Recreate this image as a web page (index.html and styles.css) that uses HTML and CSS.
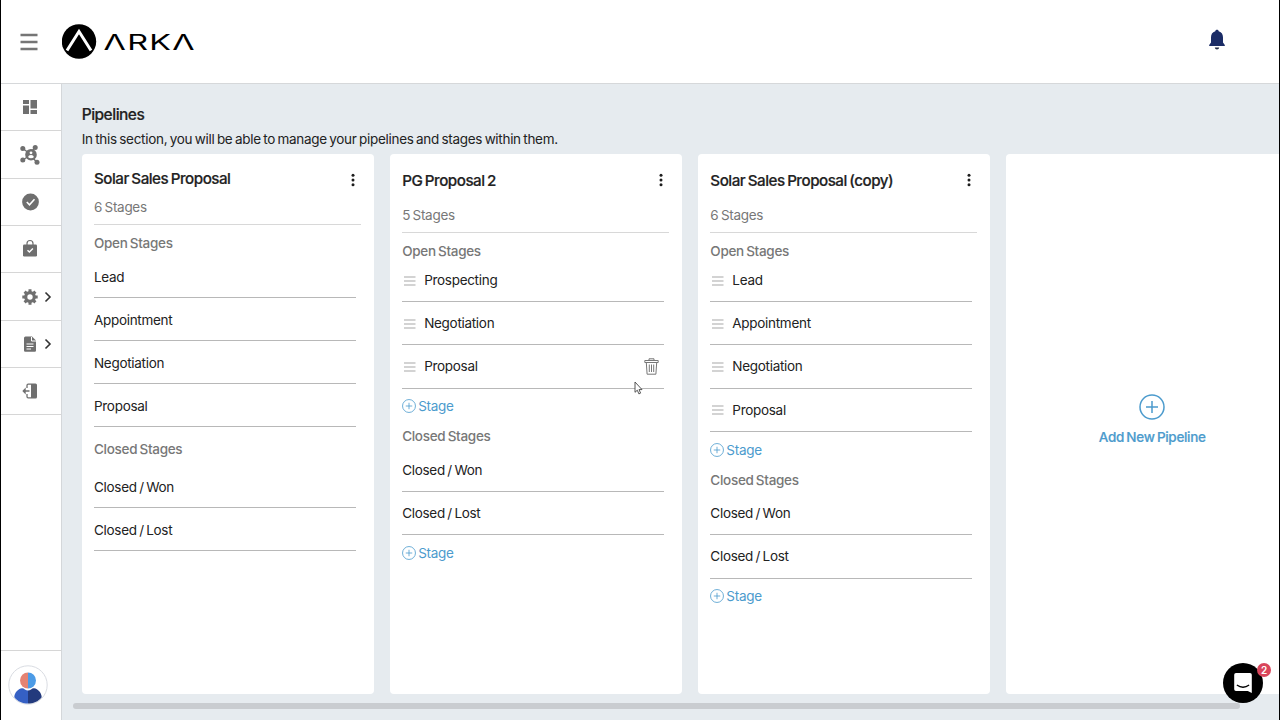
FILE: index.html
```html
<!DOCTYPE html>
<html lang="en">
<head>
    <meta charset="UTF-8">
    <meta name="viewport" content="width=device-width, initial-scale=1.0">
    <title>ARKA - Pipelines</title>
    <link rel="stylesheet" href="styles.css">
</head>
<body>
    <!-- Shared icons -->
    <svg class="hidden">
        <symbol id="drag" viewBox="0 0 12 10">
            <path d="M0 1h11.5M0 5h11.5M0 9h11.5" stroke="#a8a8a8" stroke-width="1.2"/>
        </symbol>
        <symbol id="dots" viewBox="0 0 4 14">
            <g fill="#1d1d1d"><circle cx="2" cy="2.2" r="1.5"/><circle cx="2" cy="7" r="1.5"/><circle cx="2" cy="11.8" r="1.5"/></g>
        </symbol>
        <symbol id="plus" viewBox="0 0 26 26">
            <circle cx="13" cy="13" r="12"/><path d="M13 7v12M7 13h12"/>
        </symbol>
        <symbol id="chevron" viewBox="0 0 8 12">
            <path d="M1.5 1.5L6 6l-4.500 4.500" fill="none" stroke="#333" stroke-width="1.600"/>
        </symbol>
    </svg>

    <header class="topbar">
        <svg class="burger" width="18" height="18"><path d="M.5 2h17M.5 9h17M.5 16h17" stroke="#757575" stroke-width="2.400"/></svg>
        <svg class="logo" width="136" height="36" viewBox="0 0 136 36">
            <circle cx="17" cy="17.500" r="17.200"/>
            <path d="M5 26.500L17 7.500l12 19" fill="none" stroke="#fff" stroke-width="3"/>
            <text x="41.500" y="26" textLength="92.500" lengthAdjust="spacingAndGlyphs">ΛRKΛ</text>
        </svg>
        <svg class="bell" width="18" height="22" viewBox="0 0 18 22">
            <path d="M9 .8c1 0 1.600.6 1.700 1.400C13.800 3 15 5.500 15 8.500v5l1.800 2.600v1H1.200v-1L3 13.500v-5C3 5.500 4.200 3 7.300 2.200 7.400 1.400 8 .8 9 .8z" fill="#1b2c66"/>
            <path d="M6.800 18.600h4.400c-.2 1.300-1 2-2.200 2s-2-.7-2.200-2z" fill="#222b45"/>
        </svg>
    </header>

    <div class="wrapper">
        <nav class="sidebar">
            <a class="nav-item">
                <svg width="20" height="20"><path d="M3 3h6v4H3zM3 8.500h6V17H3zM10.500 3H17v8.500h-6.500zM10.500 13H17v4h-6.500z"/></svg>
            </a>
            <a class="nav-item">
                <svg width="20" height="20" viewBox="0 0 20 20">
                    <path d="M3 3.500l5 4M15 2.500L12 6M3 15l5-3.500M16.500 17L13 13" stroke="#6f6f6f" stroke-width="1.400"/>
                    <circle cx="2.800" cy="3.500" r="2.500"/><circle cx="15.200" cy="2.500" r="2.500"/><circle cx="2.800" cy="15" r="2.500"/><circle cx="17" cy="17.300" r="2.500"/>
                    <circle cx="11" cy="9.700" r="5.800"/>
                    <g fill="#fff"><circle cx="11" cy="7.800" r="1.400"/><path d="M8.200 12.200c0-3 5.600-3 5.600 0-1.300 1.300-4.300 1.300-5.600 0z"/></g>
                </svg>
            </a>
            <a class="nav-item">
                <svg width="20" height="20"><circle cx="10.500" cy="10" r="8.400"/><path d="M6.800 10l2.700 2.800 5-5.500" fill="none" stroke="#fff" stroke-width="1.600"/></svg>
            </a>
            <a class="nav-item">
                <svg width="20" height="20"><path d="M7 6V4.500a3 3 0 0 1 6 0V6" fill="none" stroke="#6f6f6f" stroke-width="1.200"/><rect x="3" y="5.500" width="14" height="12" rx="1.200"/><path d="M7.500 11.200l1.900 1.900 3.500-3.600" fill="none" stroke="#fff" stroke-width="1.400"/></svg>
            </a>
            <a class="nav-item">
                <svg width="20" height="20" viewBox="0 0 20 20">
                    <circle cx="10" cy="10" r="4.200" fill="none" stroke="#6f6f6f" stroke-width="3.400"/>
                    <path d="M10 2.300v15.400M2.300 10h15.400M4.600 4.600l10.800 10.800M15.400 4.600L4.600 15.400" stroke="#6f6f6f" stroke-width="3"/>
                    <circle cx="10" cy="10" r="2.700" fill="#fff"/>
                </svg>
                <svg class="chevron" width="8" height="12"><use href="#chevron"/></svg>
            </a>
            <a class="nav-item">
                <svg width="20" height="20"><path d="M5.500 2.500H12l4 4V16.500a1.200 1.200 0 0 1-1.200 1.200H5.200A1.200 1.200 0 0 1 4 16.500V4a1.500 1.500 0 0 1 1.500-1.500z"/><path d="M11.500 3v4H16M6.500 10h7M6.500 12.500h7M6.500 15h4.500" fill="none" stroke="#fff" stroke-width="1"/></svg>
                <svg class="chevron" width="8" height="12"><use href="#chevron"/></svg>
            </a>
            <a class="nav-item">
                <svg width="20" height="20"><path d="M11 2.500h4.500a1.500 1.500 0 0 1 1.500 1.500v12a1.500 1.500 0 0 1-1.500 1.500H11z"/><path d="M11 3.200H8.200Q7 3.200 7 4.400V7M7 13v2.600q0 1.200 1.200 1.200H11M4.500 10H9.500" fill="none" stroke="#6f6f6f" stroke-width="1.300"/><path d="M5.700 6.600v6.800L2.300 10z"/></svg>
            </a>
            <div class="profile">
                <svg width="40" height="40" viewBox="0 0 40 40">
                    <circle cx="20" cy="20" r="19.200" fill="#fff" stroke="#d9dce2"/>
                    <path d="M20 7.500a8 8 0 0 0 0 16z" fill="#e58373"/>
                    <path d="M20 7.500a8 8 0 0 1 0 16z" fill="#4c9be6"/>
                    <path d="M20 25.500c-2.500 0-4-2.500-6-2.300-4 .5-7.500 4.500-7.700 9C9.500 36.500 15 38.500 20 38.500z" fill="#3560c4"/>
                    <path d="M20 25.500c2.500 0 4-2.500 6-2.300 4 .5 7.500 4.500 7.700 9-3.200 4.300-8.700 6.300-13.700 6.300z" fill="#233a7d"/>
                </svg>
            </div>
        </nav>

        <main class="content">
            <h1>Pipelines</h1>
            <p class="intro">In this section, you will be able to manage your pipelines and stages within them.</p>

            <div class="board">
                <section class="card fixed">
                    <div class="card-head">
                        <h2>Solar Sales Proposal</h2>
                        <svg class="dots" width="4" height="14"><use href="#dots"/></svg>
                    </div>
                    <p class="count">6 Stages</p>
                    <h3>Open Stages</h3>
                    <ul>
                        <li>Lead</li>
                        <li>Appointment</li>
                        <li>Negotiation</li>
                        <li>Proposal</li>
                    </ul>
                    <h3 class="closed">Closed Stages</h3>
                    <ul>
                        <li>Closed / Won</li>
                        <li>Closed / Lost</li>
                    </ul>
                </section>

                <section class="card">
                    <div class="card-head">
                        <h2>PG Proposal 2</h2>
                        <svg class="dots" width="4" height="14"><use href="#dots"/></svg>
                    </div>
                    <p class="count">5 Stages</p>
                    <h3>Open Stages</h3>
                    <ul>
                        <li><svg class="drag" width="12" height="10"><use href="#drag"/></svg>Prospecting</li>
                        <li><svg class="drag" width="12" height="10"><use href="#drag"/></svg>Negotiation</li>
                        <li>
                            <svg class="drag" width="12" height="10"><use href="#drag"/></svg>Proposal
                            <svg class="trash" width="15" height="17" viewBox="0 0 15 17"><path d="M.8 2.500h13.400v2H.8zM5 2.500V.8h5v1.700M2.300 4.500l.8 11.700h8.800l.8-11.700M5.300 6.500v7.500M7.500 6.500v7.500M9.700 6.500v7.500"/></svg>
                            <svg class="cursor" width="9" height="14" viewBox="0 0 9 14"><path d="M1 1v10.300l2.300-2.100 1.600 3.700 1.700-.8-1.600-3.500h3z" fill="#fff" stroke="#444" stroke-width=".9"/></svg>
                        </li>
                    </ul>
                    <a class="add-stage"><svg width="14" height="14"><use href="#plus"/></svg>Stage</a>
                    <h3 class="closed">Closed Stages</h3>
                    <ul>
                        <li>Closed / Won</li>
                        <li>Closed / Lost</li>
                    </ul>
                    <a class="add-stage"><svg width="14" height="14"><use href="#plus"/></svg>Stage</a>
                </section>

                <section class="card">
                    <div class="card-head">
                        <h2>Solar Sales Proposal (copy)</h2>
                        <svg class="dots" width="4" height="14"><use href="#dots"/></svg>
                    </div>
                    <p class="count">6 Stages</p>
                    <h3>Open Stages</h3>
                    <ul>
                        <li><svg class="drag" width="12" height="10"><use href="#drag"/></svg>Lead</li>
                        <li><svg class="drag" width="12" height="10"><use href="#drag"/></svg>Appointment</li>
                        <li><svg class="drag" width="12" height="10"><use href="#drag"/></svg>Negotiation</li>
                        <li><svg class="drag" width="12" height="10"><use href="#drag"/></svg>Proposal</li>
                    </ul>
                    <a class="add-stage"><svg width="14" height="14"><use href="#plus"/></svg>Stage</a>
                    <h3 class="closed">Closed Stages</h3>
                    <ul>
                        <li>Closed / Won</li>
                        <li>Closed / Lost</li>
                    </ul>
                    <a class="add-stage"><svg width="14" height="14"><use href="#plus"/></svg>Stage</a>
                </section>

                <section class="card new-card">
                    <svg width="26" height="26"><use href="#plus"/></svg>
                    <span>Add New Pipeline</span>
                </section>
            </div>
            <div class="scrollbar"></div>
        </main>
    </div>

    <!-- Chat launcher -->
    <div class="chat">
        <svg width="20" height="22" viewBox="0 0 20 22">
            <path d="M3 1h14a1.800 1.800 0 0 1 1.800 1.800V21l-4-2H3a1.800 1.800 0 0 1-1.800-1.800V2.800A1.800 1.800 0 0 1 3 1z" fill="#fff"/>
            <path d="M4.300 13.300c3.200 2.600 8.200 2.600 11.400 0" fill="none" stroke="#000" stroke-width="1.300" stroke-linecap="round"/>
        </svg>
        <span class="badge">2</span>
    </div>
</body>
</html>
```
FILE: styles.css
```css
* {
    box-sizing: border-box;
}

body {
    margin: 0;
    height: 720px;
    overflow: hidden;
    display: flex;
    flex-direction: column;
    border-left: 1px solid #000;
    border-right: 1px solid #000;
    background: #fff;
    color: #222;
    font-family: Inter, "Liberation Sans", sans-serif;
    font-size: 13.5px;
    letter-spacing: -0.3px;
    word-spacing: -1px;
}

h1, h2, h3, p, ul {
    margin: 0;
    padding: 0;
}

.hidden {
    display: none;
}

/* Top bar */
.topbar {
    height: 84px;
    flex: none;
    display: flex;
    align-items: center;
    padding: 0 53px 0 18.5px;
    border-bottom: 1px solid #d6d8da;
}

.logo {
    margin-left: 24.5px;
}

.logo text {
    font-family: Inter, sans-serif;
    font-size: 22px;
    font-weight: 400;
    letter-spacing: 0.9px;
}

.bell {
    margin-left: auto;
    margin-bottom: 3px;
}

.wrapper {
    flex: 1;
    min-height: 0;
    display: flex;
}

/* Sidebar */
.sidebar {
    width: 61px;
    flex: none;
    display: flex;
    flex-direction: column;
    border-right: 1px solid #d4d7da;
}

.nav-item {
    height: 47.35px;
    display: flex;
    align-items: center;
    padding-left: 19px;
    border-bottom: 1px solid #d6d6d6;
    fill: #6f6f6f;
}

.chevron {
    margin-left: 4px;
}

.profile {
    margin-top: auto;
    height: 70px;
    padding: 13.5px 0 0 6.5px;
    border-top: 1px solid #d6d6d6;
}

/* Content */
.content {
    flex: 1;
    min-width: 0;
    overflow: hidden;
    padding: 20px 0 0 19.7px;
    background: #e6ebef;
}

h1 {
    font-size: 15.5px;
    font-weight: 500;
    line-height: 22px;
    letter-spacing: -0.5px;
    -webkit-text-stroke: 0.2px #222;
}

.intro {
    line-height: 20px;
    margin: 3px 0 5px;
}

.board {
    display: flex;
    gap: 16.2px;
    width: 1300px;
    height: 540px;
}

.card {
    width: 292px;
    flex: none;
    padding: 16.4px 13px 0 12.3px;
    background: #fff;
    border-radius: 4px;
}

.card-head {
    display: flex;
    justify-content: space-between;
    height: 22px;
    padding-right: 6px;
}

h2 {
    font-size: 15.2px;
    font-weight: 500;
    line-height: 22px;
    letter-spacing: -0.5px;
    -webkit-text-stroke: 0.2px #222;
}

.dots {
    margin-top: 2.6px;
}

.count {
    color: #777;
    line-height: 20px;
    margin-top: 12.600px;
    padding-bottom: 7px;
    border-bottom: 1px solid #d8d8d8;
}

h3 {
    color: #777;
    font-size: 13.5px;
    font-weight: 500;
    line-height: 15px;
    margin-top: 11px;
}

ul {
    list-style: none;
    margin-right: 5px;
}

li {
    position: relative;
    display: flex;
    align-items: center;
    height: 43.2px;
    border-bottom: 1px solid #b8b8b8;
}

.drag {
    margin: 1px 8px 0 2px;
}

.trash {
    margin: 0 5px 0 auto;
    fill: none;
    stroke: #777;
}

.cursor {
    position: absolute;
    right: 21px;
    bottom: -7px;
}

.add-stage {
    display: flex;
    align-items: center;
    gap: 2px;
    height: 16px;
    margin-top: 9.8px;
    color: #4c9bcd;
}

.add-stage svg, .new-card svg {
    fill: none;
    stroke: #4c9bcd;
    stroke-width: 1.5;
}

.closed {
    margin: 15px 0 4.600px;
}

.fixed {
    padding-top: 14.4px;
}

.fixed .dots {
    margin-top: 4.600px;
}

.fixed .count {
    margin-top: 7px;
}

.fixed li {
    height: 42.8px;
    padding-top: 2px;
}

.fixed h3 {
    margin-bottom: 4px;
}

.fixed .closed {
    margin: 15.5px 0 8.500px;
}

.new-card {
    display: flex;
    flex-direction: column;
    align-items: center;
    justify-content: center;
    gap: 9px;
    padding: 0 0 8px;
    color: #4c9bcd;
    font-weight: 500;
    line-height: 17px;
    -webkit-text-stroke: 0.2px #4c9bcd;
}

.scrollbar {
    width: 1167px;
    height: 6px;
    margin: 8.5px 0 0 -9px;
    border-radius: 3px;
    background: #c9ccd0;
}

/* Chat */
.chat {
    position: absolute;
    right: 17px;
    bottom: 17px;
    width: 40px;
    height: 40px;
    display: flex;
    align-items: center;
    justify-content: center;
    border-radius: 50%;
    background: #000;
}

.badge {
    position: absolute;
    top: 0;
    right: -8px;
    width: 14px;
    height: 14px;
    border-radius: 50%;
    background: #d9455b;
    color: #fff;
    font-size: 10px;
    font-weight: 600;
    line-height: 14px;
    text-align: center;
}
```
